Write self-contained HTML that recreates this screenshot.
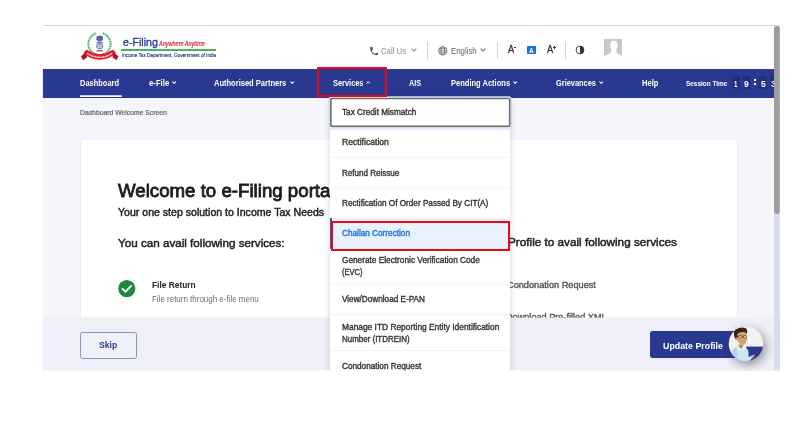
<!DOCTYPE html>
<html><head><meta charset="utf-8"><title>e-Filing</title>
<style>
html,body{margin:0;padding:0;background:#fff;}
body{width:807px;height:438px;overflow:hidden;position:relative;font-family:"Liberation Sans",sans-serif;}
#shot{position:absolute;left:0;top:0;width:807px;height:438px;clip-path:inset(25.3px 27.2px 67.4px 42.9px);}
.a{position:absolute;}
.t{position:absolute;white-space:nowrap;line-height:1;transform-origin:0 0;}
.sep{position:absolute;left:330px;width:180px;height:1px;background:#f4f4f6;}
.div{position:absolute;top:42px;width:1px;height:17px;background:#d4d4d4;}
.dig{position:absolute;top:76px;height:13px;background:#222e7c;border-radius:1px;}
</style></head><body>
<div id="shot">
 <!-- page background -->
 <div class="a" style="left:0;top:0;width:807px;height:438px;background:#f5f6fb"></div>
 <!-- header -->
 <div class="a" style="left:0;top:25px;width:807px;height:44px;background:#fff"></div>
 <div class="a" style="left:0;top:25px;width:807px;height:1px;background:#c9c9c9"></div>
 <!-- nav -->
 <div class="a" style="left:0;top:69px;width:807px;height:29px;background:#2a3990"></div>
 <svg class="a" style="left:78px;top:93px" width="46" height="6" viewBox="78 93 46 6"><rect x="80.1" y="95.3" width="41.6" height="1.8" rx="0.4" fill="#fff"/></svg>
 <!-- session digit boxes -->
 <div class="dig" style="left:732px;width:7.6px"></div>
 <div class="dig" style="left:742.7px;width:7.5px"></div>
 <div class="dig" style="left:759.1px;width:7.7px"></div>
 <div class="dig" style="left:769.8px;width:7.7px"></div>
 <div class="a" style="left:753.5px;top:79px;width:2px;height:2px;background:#fff"></div>
 <div class="a" style="left:753.5px;top:83.3px;width:2px;height:2px;background:#fff"></div>
 <!-- card -->
 <div class="a" style="left:80.8px;top:139.9px;width:656.3px;height:240px;background:#fff;border-radius:3px;box-shadow:0 0 0 0.6px #e9ebf3"></div>
 <!-- check icon -->
 <svg class="a" style="left:118px;top:280px" width="18" height="18" viewBox="0 0 18 18"><circle cx="8.8" cy="8.6" r="8.6" fill="#1d8a3c"/><path d="M4.6 8.9 L7.6 11.7 L13.1 5.9" fill="none" stroke="#fff" stroke-width="1.9" stroke-linecap="round" stroke-linejoin="round"/></svg>
 <!-- header icons -->
 <div class="div" style="left:427.3px"></div>
 <div class="div" style="left:496.9px"></div>
 <div class="div" style="left:565.4px"></div>
 <!-- emblem -->
 <svg class="a" style="left:78px;top:29px" width="44" height="34" viewBox="78 29 44 34">
  <path d="M102.75 33.29 A11.1 11.1 0 1 1 96.25 33.29" fill="none" stroke="#55b36c" stroke-width="2.1" stroke-dasharray="1.6 0.6"/>
  
  <!-- lion capital -->
  <path d="M96.6 36.6 Q99.7 34.2 102.8 36.6 L103.2 39.6 Q101.4 41 101.6 41.6 L97.8 41.6 Q98 41 96.2 39.6 Z" fill="#56649f"/>
  <rect x="96.4" y="42.2" width="6.6" height="1.2" fill="#56649f"/>
  <ellipse cx="99.7" cy="46.2" rx="3.1" ry="2.5" fill="none" stroke="#56649f" stroke-width="1"/>
  <path d="M97 46.2 H102.4 M99.7 44 V48.4" stroke="#56649f" stroke-width="0.6"/>
  <rect x="96.6" y="50.3" width="6.2" height="1" fill="#333"/>
  <!-- ribbon -->
  <path d="M80.9 56.2 L85.8 52.6 L86.6 57.6 L83.2 60.2 Z" fill="#b7121f"/>
  <path d="M118.6 56.2 L113.7 52.6 L112.9 57.6 L116.3 60.2 Z" fill="#b7121f"/>
  <path d="M84.4 55.6 L87.2 58.2 L86 53.6Z" fill="#27357f"/>
  <path d="M115.1 55.6 L112.3 58.2 L113.5 53.6Z" fill="#27357f"/>
  <path d="M83.4 53.6 Q84.6 50.4 86.8 49.8 Q99.7 58.2 112.6 49.8 Q114.8 50.4 116 53.6 Q99.7 66 83.4 53.6 Z" fill="#e11b2b"/>
  <path d="M87.3 53.3 Q99.7 61.3 112.1 53.3" fill="none" stroke="#fff" stroke-width="1.5" stroke-dasharray="0.9 0.5"/>
 </svg>
 <div class="a" style="left:121px;top:49.4px;width:95.3px;height:1.5px;background:#4db05a"></div>
 <!-- phone -->
 <svg class="a" style="left:369.6px;top:46.6px" width="8.8" height="8.8" viewBox="3 3 18 18"><path fill="#555" d="M6.62 10.79c1.44 2.83 3.76 5.14 6.59 6.59l2.2-2.2c.27-.27.67-.36 1.02-.24 1.12.37 2.33.57 3.57.57.55 0 1 .45 1 1V20c0 .55-.45 1-1 1-9.39 0-17-7.61-17-17 0-.55.45-1 1-1h3.5c.55 0 1 .45 1 1 0 1.250.2 2.45.57 3.57.11.35.03.74-.25 1.020l-2.2 2.2z"/></svg>
 <!-- chevrons header -->
 <svg class="a" style="left:410.8px;top:48.2px" width="6" height="4" viewBox="0 0 6 4"><path d="M0.7 0.7 L3 3 L5.3 0.7" fill="none" stroke="#888" stroke-width="1.05"/></svg>
 <svg class="a" style="left:479.6px;top:48.2px" width="6" height="4" viewBox="0 0 6 4"><path d="M0.7 0.7 L3 3 L5.3 0.7" fill="none" stroke="#666" stroke-width="1.05"/></svg>
 <!-- globe -->
 <svg class="a" style="left:437.5px;top:45.5px" width="10" height="10" viewBox="0 0 10 10"><g fill="none" stroke="#555" stroke-width="0.7"><circle cx="4.8" cy="4.8" r="4.1"/><ellipse cx="4.8" cy="4.8" rx="1.9" ry="4.1"/><path d="M0.7 4.8 H8.9 M1.3 2.7 H8.3 M1.3 6.9 H8.3"/></g></svg>
 <!-- A- A+ marks -->
 <div class="a" style="left:514px;top:47.2px;width:2.4px;height:1px;background:#333"></div>
 <div class="a" style="left:553.4px;top:47.2px;width:3px;height:1px;background:#333"></div>
 <div class="a" style="left:554.4px;top:46.2px;width:1px;height:3px;background:#333"></div>
 <!-- blue A box -->
 <div class="a" style="left:527.3px;top:46px;width:8.7px;height:8.1px;background:#1c6fe2;border-radius:0.8px"></div>
 <!-- contrast -->
 <svg class="a" style="left:574.7px;top:45.3px" width="10" height="10" viewBox="0 0 10 10"><circle cx="5" cy="5" r="3.9" fill="#fff" stroke="#333" stroke-width="0.9"/><path d="M5 1.1 A3.9 3.9 0 0 1 5 8.9 Z" fill="#333"/></svg>
 <!-- avatar -->
 <svg class="a" style="left:603.6px;top:38.7px" width="18.3" height="18.2" viewBox="0 0 18.3 18.2"><rect width="18.3" height="18.2" fill="#c8c8c8"/><ellipse cx="9.85" cy="6.2" rx="3.7" ry="4.4" fill="#fff"/><path d="M0 18.2 L0 17.3 C2.6 15.4 7.3 15 7.3 12.6 L7.3 8.5 L12.4 8.5 L12.4 12.600 C12.4 15 16.5 15.3 18.3 17.1 L18.3 18.2 Z" fill="#fff"/></svg>
 <!-- nav chevrons -->
 <svg class="a" style="left:172.1px;top:81.1px" width="4.4" height="3" viewBox="0 0 4.4 3"><path d="M0.4 0.5 L2.2 2.4 L4.0 0.5" fill="none" stroke="#fff" stroke-width="1.05"/></svg>
 <svg class="a" style="left:290.4px;top:81.1px" width="4.4" height="3" viewBox="0 0 4.4 3"><path d="M0.4 0.5 L2.2 2.4 L4.0 0.5" fill="none" stroke="#fff" stroke-width="1.05"/></svg>
 <svg class="a" style="left:513.2px;top:81.1px" width="4.4" height="3" viewBox="0 0 4.4 3"><path d="M0.4 0.5 L2.2 2.4 L4.0 0.5" fill="none" stroke="#fff" stroke-width="1.05"/></svg>
 <svg class="a" style="left:599.0px;top:81.1px" width="4.4" height="3" viewBox="0 0 4.4 3"><path d="M0.4 0.5 L2.2 2.4 L4.0 0.5" fill="none" stroke="#fff" stroke-width="1.05"/></svg>
 <svg class="a" style="left:366.2px;top:81.3px" width="4.4" height="3" viewBox="0 0 4.4 3"><path d="M0.5 2.6 L2.2 0.7 L3.9 2.6" fill="none" stroke="#fff" stroke-width="1"/></svg>

<span class="t" style="left:122.6px;top:36.91px;font-size:11.8px;font-weight:400;-webkit-text-stroke:0.33px #1e3d94;color:#1e3d94;transform:scaleX(0.8995)">e-Filing</span>
<span class="t" style="left:158.8px;top:41.16px;font-size:6.9px;font-weight:400;-webkit-text-stroke:0.19px #d6202c;color:#d6202c;font-style:italic;transform:scaleX(0.8007)">Anywhere Anytime</span>
<span class="t" style="left:121.8px;top:52.12px;font-size:6.0px;font-weight:400;-webkit-text-stroke:0.17px #1d3a8c;color:#1d3a8c;transform:scaleX(0.7766)">Income Tax Department, Government of India</span>
<span class="t" style="left:381.2px;top:46.70px;font-size:9.1px;font-weight:400;color:#8c8c8c;transform:scaleX(0.8563)">Call Us</span>
<span class="t" style="left:451.4px;top:46.50px;font-size:9.1px;font-weight:400;color:#5f5f5f;transform:scaleX(0.8616)">English</span>
<span class="t" style="left:508.0px;top:45.14px;font-size:10.0px;font-weight:400;-webkit-text-stroke:0.28px #333;color:#333;transform:scaleX(0.9293)">A</span>
<span class="t" style="left:547.1px;top:45.14px;font-size:10.0px;font-weight:400;-webkit-text-stroke:0.28px #333;color:#333;transform:scaleX(0.9293)">A</span>
<span class="t" style="left:529.3px;top:46.64px;font-size:7.4px;font-weight:700;color:#fff;transform:scaleX(0.8795)">A</span>
<span class="t" style="left:80.3px;top:78.70px;font-size:8.5px;font-weight:700;color:#fff;transform:scaleX(0.8783)">Dashboard</span>
<span class="t" style="left:148.8px;top:78.70px;font-size:8.5px;font-weight:700;color:#fff;transform:scaleX(0.9098)">e-File</span>
<span class="t" style="left:214.3px;top:78.70px;font-size:8.5px;font-weight:700;color:#fff;transform:scaleX(0.8847)">Authorised Partners</span>
<span class="t" style="left:332.6px;top:78.70px;font-size:8.5px;font-weight:700;color:#fff;transform:scaleX(0.8718)">Services</span>
<span class="t" style="left:408.9px;top:78.70px;font-size:8.5px;font-weight:700;color:#fff;transform:scaleX(0.8538)">AIS</span>
<span class="t" style="left:450.8px;top:78.70px;font-size:8.5px;font-weight:700;color:#fff;transform:scaleX(0.8854)">Pending Actions</span>
<span class="t" style="left:555.6px;top:78.70px;font-size:8.5px;font-weight:700;color:#fff;transform:scaleX(0.8703)">Grievances</span>
<span class="t" style="left:641.5px;top:78.70px;font-size:8.5px;font-weight:700;color:#fff;transform:scaleX(0.8957)">Help</span>
<span class="t" style="left:685.6px;top:80.17px;font-size:7.0px;font-weight:700;color:#fff;transform:scaleX(0.9175)">Session Time</span>
<span class="t" style="left:734.1px;top:78.84px;font-size:9.4px;font-weight:700;color:#fff;transform:scaleX(0.6515)">1</span>
<span class="t" style="left:744.0px;top:78.84px;font-size:9.4px;font-weight:700;color:#fff;transform:scaleX(0.9198)">9</span>
<span class="t" style="left:760.6px;top:78.84px;font-size:9.4px;font-weight:700;color:#fff;transform:scaleX(0.9198)">5</span>
<span class="t" style="left:771.0px;top:78.84px;font-size:9.4px;font-weight:700;color:#fff;transform:scaleX(0.9198)">3</span>
<span class="t" style="left:79.9px;top:109.96px;font-size:6.9px;font-weight:400;-webkit-text-stroke:0.19px #626262;color:#626262;transform:scaleX(0.9879)">Dashboard Welcome Screen</span>
<span class="t" style="left:118.4px;top:181.51px;font-size:18.3px;font-weight:400;-webkit-text-stroke:0.82px #1c1c1c;color:#1c1c1c;transform:scaleX(1.0216)">Welcome to e-Filing portal</span>
<span class="t" style="left:118.4px;top:208.05px;font-size:10.1px;font-weight:400;-webkit-text-stroke:0.42px #222;color:#222;transform:scaleX(1.0464)">Your one step solution to Income Tax Needs</span>
<span class="t" style="left:118.4px;top:238.09px;font-size:11.0px;font-weight:400;-webkit-text-stroke:0.46px #222;color:#222;transform:scaleX(1.0587)">You can avail following services:</span>
<span class="t" style="left:507.6px;top:237.39px;font-size:11.0px;font-weight:400;-webkit-text-stroke:0.46px #222;color:#222;transform:scaleX(1.0672)">Profile to avail following services</span>
<span class="t" style="left:152.3px;top:280.83px;font-size:9.3px;font-weight:700;color:#222;transform:scaleX(0.8999)">File Return</span>
<span class="t" style="left:152.3px;top:295.19px;font-size:8.4px;font-weight:400;color:#707070;transform:scaleX(0.9520)">File return through e-file menu</span>
<span class="t" style="left:506.5px;top:280.87px;font-size:8.9px;font-weight:400;-webkit-text-stroke:0.37px #555;color:#555;transform:scaleX(1.0354)">Condonation Request</span>
<span class="t" style="left:506.0px;top:312.87px;font-size:8.9px;font-weight:400;-webkit-text-stroke:0.37px #555;color:#555;transform:scaleX(1.0300)">Download Pre-filled XML</span>
 <!-- footer bar -->
 <div class="a" style="left:0;top:317px;width:807px;height:1px;background:#eeeff8;opacity:0.45"></div>
 <div class="a" style="left:0;top:318px;width:807px;height:60px;background:#eeeff8;box-shadow:0 -0.5px 1.5px rgba(60,60,120,0.05)"></div>
 <div class="a" style="left:80.2px;top:331.7px;width:56.6px;height:26.9px;box-sizing:border-box;border:1px solid #8a92c6;border-radius:2.5px;background:#eff0f9"></div>
 <div class="a" style="left:649.5px;top:331.4px;width:90px;height:26.8px;border-radius:2.5px;background:#2a3990"></div>
<span class="t" style="left:99.3px;top:339.70px;font-size:9.8px;font-weight:700;color:#2a3990;transform:scaleX(0.8791)">Skip</span>
<span class="t" style="left:663.4px;top:340.64px;font-size:9.4px;font-weight:700;color:#fff;transform:scaleX(0.9424)">Update Profile</span>
 <!-- dropdown -->
 <div class="a" style="left:330px;top:98px;width:180px;height:290px;background:#fff;box-shadow:0 1px 7px rgba(0,0,0,0.16)"></div>
 <div class="sep" style="top:156.6px"></div>
 <div class="sep" style="top:186.6px"></div>
 <div class="sep" style="top:284.4px"></div>
 <div class="sep" style="top:313.8px"></div>
 <div class="sep" style="top:350.2px"></div>
 <!-- focused first item -->
 <svg class="a" style="left:326px;top:94px" width="190" height="38" viewBox="326 94 190 38"><rect x="329.1" y="96.8" width="182.3" height="32.2" rx="2.2" fill="#fff" stroke="#bcd5f3" stroke-width="1"/><rect x="330.8" y="98.5" width="178.9" height="27.9" rx="1" fill="#fff" stroke="#6c6c6c" stroke-width="1.6"/></svg>
 <!-- challan highlighted -->
 <div class="a" style="left:330px;top:217.5px;width:180px;height:31.5px;background:#e9f1fc"></div>
 <div class="a" style="left:330px;top:217.5px;width:1.8px;height:31.5px;background:#1b5fd2"></div>
 <div class="a" style="left:330.6px;top:221px;width:179.8px;height:29.5px;box-sizing:border-box;border:2px solid #ef0716"></div>
<span class="t" style="left:341.7px;top:108.07px;font-size:8.3px;font-weight:400;-webkit-text-stroke:0.35px #333;color:#333;transform:scaleX(0.9886)">Tax Credit Mismatch</span>
<span class="t" style="left:341.7px;top:138.07px;font-size:8.3px;font-weight:400;-webkit-text-stroke:0.35px #333;color:#333;transform:scaleX(1.0375)">Rectification</span>
<span class="t" style="left:341.7px;top:168.57px;font-size:8.3px;font-weight:400;-webkit-text-stroke:0.35px #333;color:#333;transform:scaleX(0.9687)">Refund Reissue</span>
<span class="t" style="left:341.7px;top:198.77px;font-size:8.3px;font-weight:400;-webkit-text-stroke:0.35px #333;color:#333;transform:scaleX(0.9854)">Rectification Of Order Passed By CIT(A)</span>
<span class="t" style="left:342.2px;top:228.97px;font-size:8.3px;font-weight:400;-webkit-text-stroke:0.35px #1f6fd8;color:#1f6fd8;transform:scaleX(0.9895)">Challan Correction</span>
<span class="t" style="left:341.7px;top:256.37px;font-size:8.3px;font-weight:400;-webkit-text-stroke:0.35px #333;color:#333;transform:scaleX(0.9960)">Generate Electronic Verification Code</span>
<span class="t" style="left:341.7px;top:268.07px;font-size:8.3px;font-weight:400;-webkit-text-stroke:0.35px #333;color:#333;transform:scaleX(0.9073)">(EVC)</span>
<span class="t" style="left:341.7px;top:295.27px;font-size:8.3px;font-weight:400;-webkit-text-stroke:0.35px #333;color:#333;transform:scaleX(0.9858)">View/Download E-PAN</span>
<span class="t" style="left:341.7px;top:323.07px;font-size:8.3px;font-weight:400;-webkit-text-stroke:0.35px #333;color:#333;transform:scaleX(1.0090)">Manage ITD Reporting Entity Identification</span>
<span class="t" style="left:341.7px;top:334.67px;font-size:8.3px;font-weight:400;-webkit-text-stroke:0.35px #333;color:#333;transform:scaleX(0.9584)">Number (ITDREIN)</span>
<span class="t" style="left:341.7px;top:361.67px;font-size:8.3px;font-weight:400;-webkit-text-stroke:0.35px #333;color:#333;transform:scaleX(0.9880)">Condonation Request</span>
 <!-- nav red box -->
 <div class="a" style="left:317px;top:67px;width:70.2px;height:30px;box-sizing:border-box;border:2px solid #ef0716"></div>
 <!-- scrollbar -->
 <div class="a" style="left:774px;top:25px;width:7px;height:350px;background:#d9dbee"></div>
 <div class="a" style="left:774px;top:26.3px;width:6px;height:187.7px;background:#9d9d9d;border-radius:3px"></div>
 <!-- chatbot avatar -->
 <svg class="a" style="left:708px;top:306px;overflow:visible" width="80" height="80" viewBox="708 306 80 80">
  <defs><clipPath id="cc"><circle cx="746" cy="343.85" r="17.3"/></clipPath>
  <filter id="sh" x="-100%" y="-100%" width="300%" height="300%"><feGaussianBlur stdDeviation="4.5"/></filter></defs>
  <circle cx="748.2" cy="347.2" r="18.5" fill="rgba(50,50,58,0.42)" filter="url(#sh)"/>
  <g clip-path="url(#cc)">
   <rect x="728" y="326" width="36" height="36" fill="#f1f1f1"/>
   <rect x="746.1" y="346.6" width="18" height="16" fill="#2a3990"/>
   <!-- shirt -->
   <path d="M730.5 362 L731.2 353 Q732.8 348.6 736.4 347 L738.4 346 L741.2 349.6 L743.400 345.8 L746 347.5 Q748.2 349 748.5 352 L748.7 357 L751.3 355.8 L752.2 358.2 L748 362 Z" fill="#cde6f2"/>
   <path d="M730.5 362 L731.2 353 Q732.8 348.6 736.4 347 L737.2 353 L736.5 362 Z" fill="#b2d3e5"/>
   <path d="M738.4 346 L741.2 349.6 L743.4 345.8 L742.600 344.6 L738.6 344.4 Z" fill="#c68c5a"/>
   <path d="M736.4 347 L738.4 346 L741.2 349.6 L740 351.2 Z M743.4 345.8 L746 347.5 L743.6 350.6 L741.2 349.6 Z" fill="#e6f3fa"/>
   <!-- face -->
   <path d="M737.2 333.200 L745.8 332.6 L746.5 336.8 L747.5 339.6 L746.3 340.900 L745.6 343 L743.5 345.1 L740.6 344.7 L737.8 341.4 L736.6 338.800 Z" fill="#dba470"/>
   <path d="M736.400 337 Q735.3 337.4 735.8 339.2 Q736.400 340.5 737.4 340 Z" fill="#cf9560"/>
   <!-- hair -->
   <path d="M735.9 339.6 Q733.2 335.5 733.9 331.5 Q734.6 328.600 738 327.9 Q742.5 326.7 746.4 328.5 Q747.8 330.4 746.7 334.4 L745.9 332.700 Q743.5 331.7 741 332.5 Q738.6 333.100 737.600 333.600 L737.3 337.3 L736.6 337.2 Z" fill="#3a2317"/>
   <!-- glasses -->
   <g fill="rgba(255,255,255,0.35)" stroke="#3a2a22" stroke-width="0.6"><rect x="738.6" y="335.7" width="3.4" height="2.5" rx="0.7"/><rect x="743.3" y="335.5" width="3.2" height="2.5" rx="0.7"/></g>
   <path d="M742 336.700 H743.3 M738.6 336.600 L736.6 336.500" stroke="#3a2a22" stroke-width="0.6" fill="none"/>
   <!-- mouth / goatee -->
   <path d="M742.3 341.6 Q743.8 342.3 745.3 341.3 L744.8 342.5 Q743.6 343 742.8 342.5 Z" fill="#fff" stroke="#7a4a30" stroke-width="0.3"/>
   <!-- hand -->
   <path d="M750.9 355.7 L754.1 354.300 L754.7 355.5 L752.6 358.4 Z" fill="#dba470"/>
  </g>
 </svg>

</div>
</body></html>
